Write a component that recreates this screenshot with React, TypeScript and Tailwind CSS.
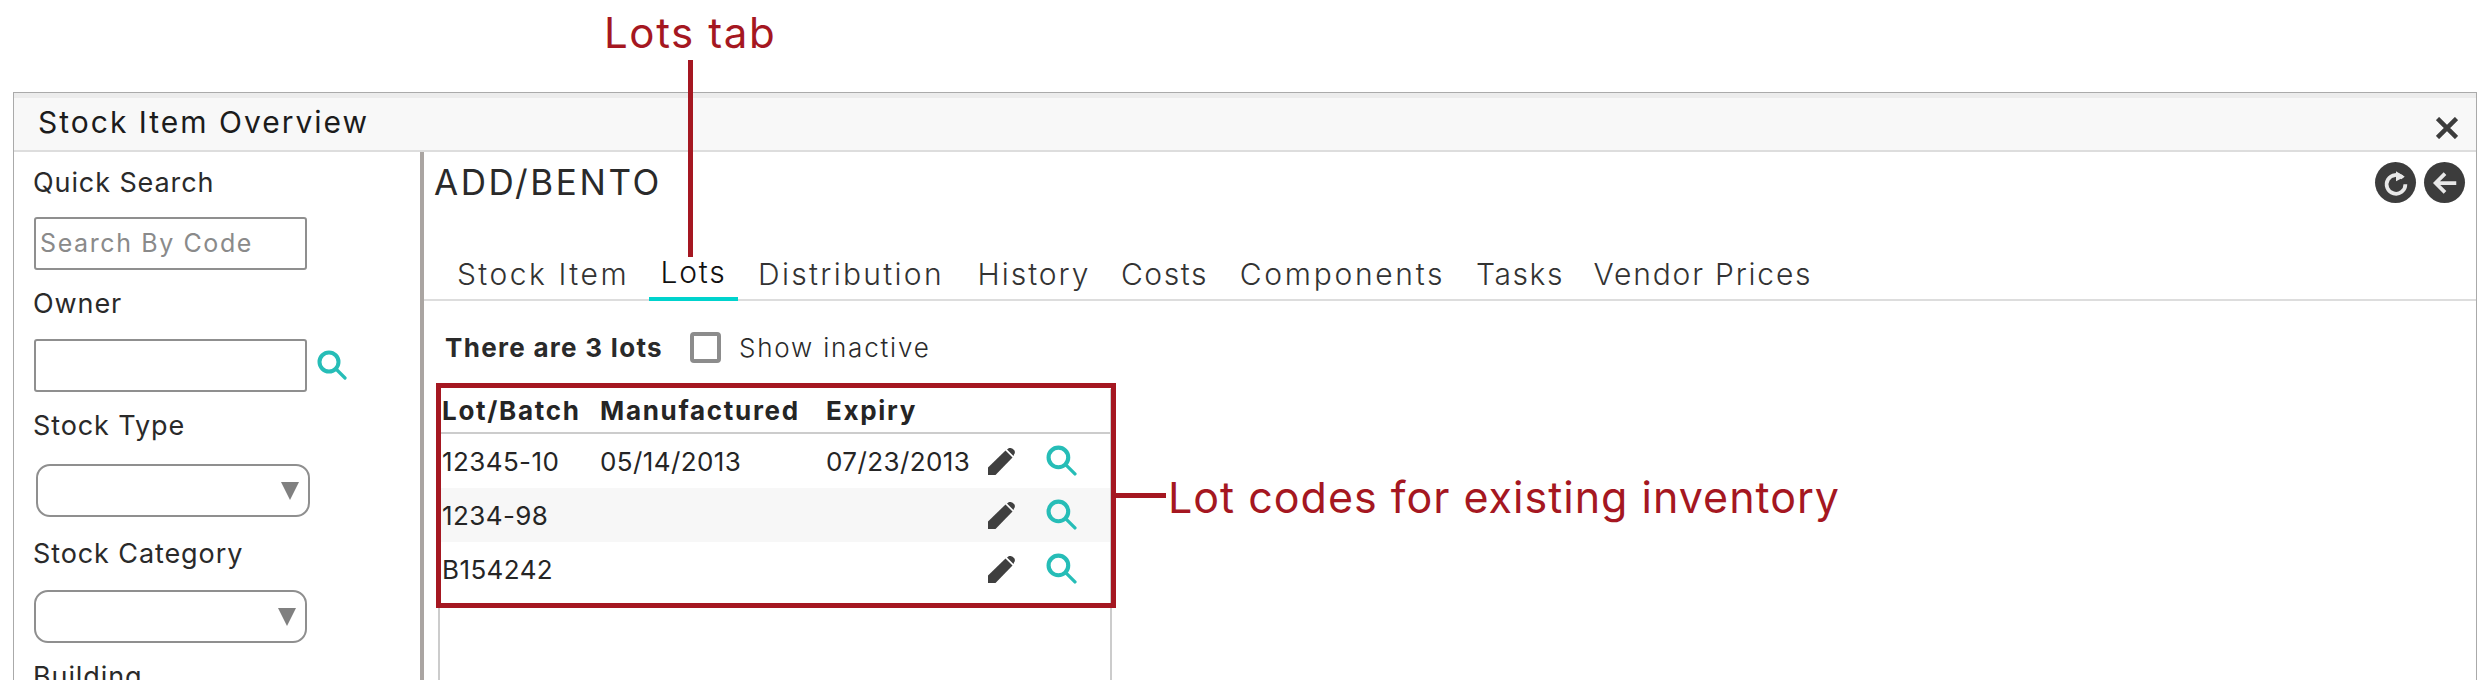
import React from "react";

const tabs = [
  { label: "Stock Item", width: "w-[194px] tracking-[2.5px]" },
  { label: "Lots", width: "w-[89px] ml-[3px] tracking-[1.8px]", active: true },
  { label: "Distribution", width: "w-[214px] tracking-[2.3px]" },
  { label: "History", width: "w-[140px] tracking-[2px]" },
  { label: "Costs", width: "w-[109px] tracking-[1.6px]" },
  { label: "Components", width: "w-[235px] tracking-[2.7px]" },
  { label: "Tasks", width: "w-[108px] tracking-[1.6px]" },
  { label: "Vendor Prices", width: "w-[246px] tracking-[1.8px]" },
];

const lots = [
  { code: "12345-10", made: "05/14/2013", expiry: "07/23/2013" },
  { code: "1234-98", made: "", expiry: "" },
  { code: "B154242", made: "", expiry: "" },
];

function SearchIcon({ className }: { className: string }) {
  return (
    <svg viewBox="0 0 30 30" className={className} fill="none" stroke="#26bdb7" strokeLinecap="round">
      <circle cx="12" cy="12" r="9.5" strokeWidth="4" />
      <path d="M19 19 L28 28" strokeWidth="3.2" />
    </svg>
  );
}

function PencilIcon() {
  return (
    <svg viewBox="0 0 27 27" className="w-[27px] h-[27px]" fill="#3f3f3f">
      <path d="M0 27 L0 19.5 L17.5 2.5 L24.5 9.5 L7.5 27 Z" />
      <path d="M19 1.5 L21 0 Q24 -0.5 26.5 2.5 Q27.5 5 26 6.5 L25.5 8 Z" />
    </svg>
  );
}

function RoundButton({ children }: { children: React.ReactNode }) {
  return (
    <span className="w-[41px] h-[41px] rounded-full bg-[#3c3c3c] flex items-center justify-center">
      <svg viewBox="0 0 24 24" className="w-[30px] h-[30px]" fill="none" stroke="#e8e8e8" strokeWidth="3">
        {children}
      </svg>
    </span>
  );
}

function Arrow() {
  return (
    <svg viewBox="0 0 18 18" className="w-[18px] h-[18px]" fill="#808080">
      <polygon points="0,0 18,0 9,18" />
    </svg>
  );
}

function Sidebar() {
  return (
    <div className="w-[406px] shrink-0 pl-[19px] text-[27px] text-[#2a2a2a] tracking-[0.9px]">
      <div className="h-[30px] mt-4 leading-[30px]">Quick Search</div>
      <div className="mt-[19px] ml-[1px] w-[273px] h-[53px] border-2 border-[#8f8f8f] rounded-[3px] pl-[4px] text-[25px] leading-[49px] tracking-[1.6px] text-[#8a8a8a]">
        Search By Code
      </div>
      <div className="mt-[19px] h-[30px] leading-[30px]">Owner</div>
      <div className="mt-[20px] ml-[1px] flex items-center">
        <div className="w-[273px] h-[53px] border-2 border-[#8f8f8f] rounded-[3px]" />
        <SearchIcon className="w-[30px] h-[30px] ml-[10px] -mt-[2px]" />
      </div>
      <div className="mt-[19px] h-[30px] leading-[30px]">Stock Type</div>
      <div className="mt-[23px] ml-[3px] w-[274px] h-[53px] border-2 border-[#8f8f8f] rounded-[14px] flex items-center justify-end pr-[9px]">
        <Arrow />
      </div>
      <div className="mt-[22px] h-[30px] leading-[30px]">Stock Category</div>
      <div className="mt-[21px] ml-[1px] w-[273px] h-[53px] border-2 border-[#8f8f8f] rounded-[14px] flex items-center justify-end pr-[9px]">
        <Arrow />
      </div>
      <div className="mt-[19px] h-[30px] leading-[30px]">Building</div>
    </div>
  );
}

function LotsTable() {
  return (
    <div className="relative ml-[14px] mt-[26px] w-[674px] h-[400px] border-x-2 border-[#cccccc] text-[#252525]">
      <div className="flex h-[45px] items-center border-b-2 border-[#cccccc] pl-[2px] text-[26px] font-bold tracking-[1.7px]">
        <span className="w-[158px]">Lot/Batch</span>
        <span className="w-[226px]">Manufactured</span>
        <span>Expiry</span>
      </div>
      {lots.map((lot, i) => (
        <div key={lot.code} className={`flex h-[54px] items-center pl-[2px] text-[26px] tracking-[0.4px] ${i === 1 ? "bg-[#f7f7f7]" : "bg-white"}`}>
          <span className="w-[158px]">{lot.code}</span>
          <span className="w-[226px]">{lot.made}</span>
          <span className="w-[162px]">{lot.expiry}</span>
          <PencilIcon />
          <SearchIcon className="w-[31px] h-[31px] ml-[31px] -mt-[1px]" />
        </div>
      ))}
    </div>
  );
}

export default function App() {
  return (
    <div className="relative h-[680px] overflow-hidden bg-white font-[Inter,sans-serif]">
      <div className="pt-[92px] pl-[13px]">
        <div className="h-[600px] border border-[#aaaaaa] overflow-hidden">
          <div className="h-[59px] border-t-[5px] border-t-[#ececec] border-b-2 border-b-[#dddddd] bg-[#f8f8f8] flex items-center justify-between pl-6 pr-[18px]">
            <span className="-mt-[3px] text-[30px] text-[#1c1c1c] tracking-[2px]">Stock Item Overview</span>
            <svg viewBox="0 0 22 22" className="w-[22px] h-[22px] mt-[8px]" stroke="#3c3c3c" strokeWidth="4.5">
              <path d="M1.5 1.5 L20.5 20.5 M20.5 1.5 L1.5 20.5" />
            </svg>
          </div>
          <div className="flex h-[540px]">
            <Sidebar />
            <div className="flex-1 border-l-4 border-[#aaa5a2]">
              <div className="flex items-start justify-between pl-[10px] pr-[11px]">
                <span className="mt-[9px] text-[35px] leading-[42px] text-[#2a2a2a] tracking-[2.6px]">ADD/BENTO</span>
                <div className="flex gap-2 mt-[10px]">
                  <RoundButton>
                    <path d="M17.5 8 A7.5 7.5 0 1 0 19.5 13" />
                    <path d="M12 2.5 L19 7 L12 10.5 Z" fill="#e8e8e8" stroke="none" />
                  </RoundButton>
                  <RoundButton>
                    <path d="M21 12 H5 M12 4.5 L4.5 12 L12 19.5" />
                  </RoundButton>
                </div>
              </div>
              <div className="mt-[48px] h-[50px] flex gap-[6px] pl-[22px] border-b-2 border-[#dddddd]">
                {tabs.map((tab) => (
                  <div
                    key={tab.label}
                    className={`${tab.width} h-[50px] shrink-0 pb-[3px] flex items-center justify-center text-[30px] font-light ${
                      tab.active ? "border-b-4 border-[#00d3cd] text-[#111111]" : "text-[#333333]"
                    }`}
                  >
                    {tab.label}
                  </div>
                ))}
              </div>
              <div className="mt-[30px] h-[32px] pl-[21px] flex items-center text-[26px] text-[#2a2a2a]">
                <span className="font-bold tracking-[1.3px]">There are 3 lots</span>
                <span className="ml-[27px] w-[31px] h-[31px] border-4 border-[#8c8c8c] rounded-[4px]" />
                <span className="ml-[18px] font-light tracking-[1.8px]">Show inactive</span>
              </div>
              <LotsTable />
            </div>
          </div>
        </div>
      </div>

      {/* annotations drawn over the screenshot */}
      <div className="absolute left-[604px] top-[8px] text-[42px] leading-[50px] tracking-[1.6px] text-[#a51721]">Lots tab</div>
      <div className="absolute left-[688px] top-[60px] w-[5px] h-[197px] bg-[#a51721]" />
      <div className="absolute left-[436px] top-[383px] w-[680px] h-[225px] border-[5px] border-[#a51721]" />
      <div className="absolute left-[1116px] top-[493px] w-[50px] h-[5px] bg-[#a51721]" />
      <div className="absolute left-[1168px] top-[472px] text-[43px] leading-[50px] tracking-[1px] text-[#a51721]">
        Lot codes for existing inventory
      </div>
    </div>
  );
}
